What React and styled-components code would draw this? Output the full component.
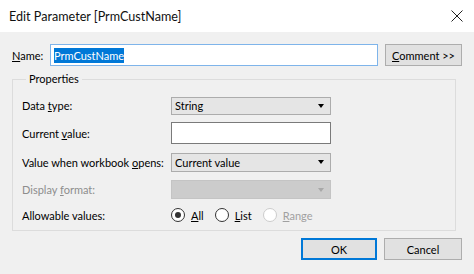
import React from 'react';
import styled, { createGlobalStyle } from 'styled-components';

const GlobalStyle = createGlobalStyle`
  html, body { margin: 0; padding: 0; background: #f0f0f0; }
  body { font-family: Lato, "Liberation Sans", sans-serif; color: #000; }
`;

const Window = styled.div`
  width: 474px;
  height: 274px;
  background: #f0f0f0;
  display: flex;
  flex-direction: column;
  overflow: hidden;
`;

const TitleBar = styled.div`
  height: 32px;
  background: #fff;
  display: flex;
  align-items: center;
  justify-content: space-between;
  padding: 0 11px 0 9px;
  font-size: 12.6px;
  color: #111;
`;

const Body = styled.div`
  padding: 12px 12px 0 12px;
  font-size: 11px;
  white-space: nowrap;
`;

const NameRow = styled.div`
  display: flex;
  align-items: center;
  height: 22px;
`;

const NameLabel = styled.label`
  width: 38px;
`;

const TextBox = styled.div`
  box-sizing: border-box;
  width: ${p => p.$w}px;
  height: ${p => p.$h || 22}px;
  background: #fff;
  border: 1px solid ${p => (p.$focus ? '#7eb4ea' : '#7a7a7a')};
  display: flex;
  align-items: center;
  padding-left: 3px;
`;

const Selected = styled.span`
  background: #0078d7;
  color: #fff;
  line-height: 15px;
`;

const Button = styled.button`
  box-sizing: border-box;
  width: ${p => p.$w || 77}px;
  height: 22px;
  font: inherit;
  font-size: 11px;
  background: #e1e1e1;
  border: 1px solid ${p => (p.$default ? '#0078d7' : '#adadad')};
  box-shadow: ${p => (p.$default ? 'inset 0 0 0 1px #0078d7' : 'none')};
  padding: 0;
  color: #000;
  margin-left: ${p => p.$ml || 0}px;
`;

const Group = styled.fieldset`
  margin: 5px 6px 0 0;
  padding: 5px 0 2px 9px;
  border: 1px solid #dcdcdc;
`;

const Legend = styled.legend`
  padding: 0 3px;
  margin-left: 4px;
  line-height: 16px;
`;

const Grid = styled.div`
  display: grid;
  grid-template-columns: 149px 160px;
  grid-template-rows: 27px 28px 30px 25px 26px;
  align-items: center;
`;

const Label = styled.div`
  color: ${p => (p.$disabled ? '#8d8d8d' : '#000')};
`;

const Combo = styled.div`
  box-sizing: border-box;
  width: 160px;
  height: ${p => p.$h || 19}px;
  background: ${p => (p.$disabled ? '#cccccc' : '#e5e5e5')};
  border: 1px solid ${p => (p.$disabled ? '#c4c4c4' : '#acacac')};
  display: flex;
  align-items: center;
  justify-content: space-between;
  padding: 0 6px 0 3px;
`;

const Arrow = styled.span`
  width: 0;
  height: 0;
  border-left: 3.5px solid transparent;
  border-right: 3.5px solid transparent;
  border-top: 4px solid ${p => (p.$disabled ? '#a8a8a8' : '#000')};
`;

const Radios = styled.div`
  display: flex;
  align-items: center;
`;

const Radio = styled.div`
  display: flex;
  align-items: center;
  gap: 6px;
  margin-right: ${p => p.$mr || 0}px;
  color: ${p => (p.$disabled ? '#a0a0a0' : '#000')};
`;

const Circle = styled.span`
  box-sizing: border-box;
  width: 14px;
  height: 14px;
  border-radius: 50%;
  border: 1px solid ${p => (p.$disabled ? '#cccccc' : '#333')};
  background: #fff;
  display: flex;
  align-items: center;
  justify-content: center;
  &::after {
    content: '';
    width: 6px;
    height: 6px;
    border-radius: 50%;
    background: ${p => (p.$checked ? '#333' : 'transparent')};
  }
`;

const Footer = styled.div`
  display: flex;
  justify-content: flex-end;
  margin-top: 7px;
`;

function Close() {
  return (
    <svg width="12" height="12" viewBox="0 0 12 12">
      <path d="M0.5 0.5 L11.5 11.5 M11.5 0.5 L0.5 11.5" stroke="#222" strokeWidth="1" fill="none" />
    </svg>
  );
}

export default function App() {
  return (
    <Window>
      <GlobalStyle />
      <TitleBar>
        <span>Edit Parameter [PrmCustName]</span>
        <Close />
      </TitleBar>
      <Body>
        <NameRow>
          <NameLabel><u>N</u>ame:</NameLabel>
          <TextBox $w={328} $focus><Selected>PrmCustName</Selected></TextBox>
          <Button $w={77} $ml={7}><u>C</u>omment &gt;&gt;</Button>
        </NameRow>
        <Group>
          <Legend>Properties</Legend>
          <Grid>
            <Label>Data <u>t</u>ype:</Label>
            <Combo $h={18}>String<Arrow /></Combo>
            <Label>Current <u>v</u>alue:</Label>
            <TextBox $w={160} $h={22} />
            <Label>Value when workbook <u>o</u>pens:</Label>
            <Combo>Current value<Arrow /></Combo>
            <Label $disabled>Display <u>f</u>ormat:</Label>
            <Combo $disabled><span /><Arrow $disabled /></Combo>
            <Label>Allowable values:</Label>
            <Radios>
              <Radio $mr={11}><Circle $checked /><span><u>A</u>ll</span></Radio>
              <Radio $mr={11}><Circle /><span><u>L</u>ist</span></Radio>
              <Radio $disabled><Circle $disabled /><span><u>R</u>ange</span></Radio>
            </Radios>
          </Grid>
        </Group>
        <Footer>
          <Button $default $w={76}>OK</Button>
          <Button $w={78} $ml={7}>Cancel</Button>
        </Footer>
      </Body>
    </Window>
  );
}
